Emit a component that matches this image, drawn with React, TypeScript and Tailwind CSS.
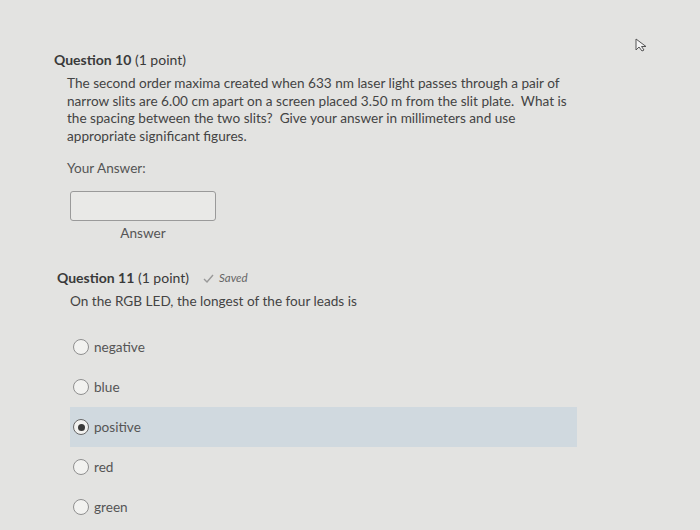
import React from 'react';

const options = ['negative', 'blue', 'positive', 'red', 'green'];

function Radio({ checked }: { checked: boolean }) {
  return (
    <span
      className={`flex h-[16px] w-[16px] shrink-0 items-center justify-center rounded-full border bg-[#f2f2f0] ${checked ? 'border-[#666]' : 'border-[#8f8f8f]'}`}
    >
      {checked && <span className="h-[7px] w-[7px] rounded-full bg-[#3a3a3a]" />}
    </span>
  );
}

export default function App() {
  return (
    <div className="relative h-[530px] w-[700px] overflow-hidden bg-[#e3e3e1] font-['Lato','Liberation_Sans',sans-serif] text-[#3a3a3a]">
      {/* cursor */}
      <svg className="absolute left-[634px] top-[38px]" width="14" height="14" viewBox="0 0 14 14">
        <path d="M2 1 L2 12 L5 9 L8 13 L10 12 L7.5 8.5 L12 8.5 Z" fill="#f4f4f4" stroke="#555" strokeWidth="1" strokeLinejoin="round" />
      </svg>

      <div className="pl-[54px] pt-[50px]">
        <h2 className="text-[14px] leading-[20px]">
          <span className="font-bold">Question 10</span> (1 point)
        </h2>
        <div className="pl-[13px] pt-[5px]">
          <p className="w-[512px] text-[13.6px] leading-[17.5px] text-[#444]">
            The second order maxima created when 633 nm laser light passes through a pair of narrow slits are 6.00 cm apart on a screen placed 3.50 m from the slit plate.&nbsp; What is the spacing between the two slits?&nbsp; Give your answer in millimeters and use appropriate significant figures.
          </p>
          <p className="pt-[14px] text-[13.6px] leading-[18px] text-[#555]">Your Answer:</p>
          <div className="ml-[3px] mt-[14px] h-[30px] w-[146px] rounded-[3px] border border-[#9a9a9a] bg-[#e9e9e7]" />
          <p className="w-[152px] pt-[3px] text-center text-[13.6px] leading-[18px] text-[#555]">Answer</p>
        </div>

        <div className="flex items-center gap-[14px] pl-[3px] pt-[26px]">
          <h2 className="text-[14px] leading-[20px]">
            <span className="font-bold">Question 11</span> (1 point)
          </h2>
          <span className="flex items-center gap-[5px] text-[11.5px] italic text-[#666]">
            <svg width="11" height="9" viewBox="0 0 11 9">
              <path d="M1 5 L4 8 L10 1" fill="none" stroke="#999" strokeWidth="1.4" />
            </svg>
            Saved
          </span>
        </div>
        <p className="pl-[16px] pt-[4px] text-[13.6px] leading-[18px] text-[#444]">
          On the RGB LED, the longest of the four leads is
        </p>

        <div className="flex flex-col pl-[16px] pt-[17px]">
          {options.map((o) => {
            const sel = o === 'positive';
            return (
              <div
                key={o}
                className={`flex h-[40px] w-[507px] items-center gap-[5px] pl-[3px] ${sel ? 'bg-[#d0d9df]' : ''}`}
              >
                <Radio checked={sel} />
                <span className="text-[13.6px] text-[#555]">{o}</span>
              </div>
            );
          })}
        </div>
      </div>
    </div>
  );
}
